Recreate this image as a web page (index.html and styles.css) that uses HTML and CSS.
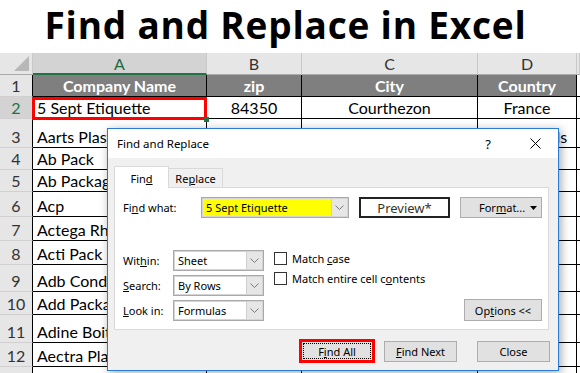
FILE: index.html
```html
<!DOCTYPE html>
<html lang="en">
<head>
  <meta charset="UTF-8">
  <title>Find and Replace in Excel</title>
  <link rel="stylesheet" href="styles.css">
</head>
<body>
  <div class="page">
    <h1 class="title">Find and Replace in Excel</h1>

    <div class="sheet">
      <!-- column letters -->
      <div class="hd corner"><span class="tri"></span></div>
      <div class="hd sel">A</div>
      <div class="hd">B</div>
      <div class="hd">C</div>
      <div class="hd">D</div>
      <div class="hd"></div>

      <div class="num">1</div>
      <div class="th">Company Name</div>
      <div class="th">zip</div>
      <div class="th">City</div>
      <div class="th">Country</div>
      <div class="e"></div>

      <div class="num sel-num">2</div>
      <div class="name picked">5 Sept Etiquette</div>
      <div>84350</div>
      <div>Courthezon</div>
      <div>France</div>
      <div class="e"></div>

      <div class="num">3</div>
      <div class="name">Aarts Plastics</div>
      <div>5491</div>
      <div>Sint-Oedenrode</div>
      <div>Nederlands</div>
      <div class="e"></div>

      <div class="num">4</div>
      <div class="name">Ab Pack</div>
      <div>84800</div>
      <div>Saumane</div>
      <div>France</div>
      <div class="e"></div>

      <div class="num">5</div>
      <div class="name">Ab Packaging</div>
      <div>31300</div>
      <div>Toulouse</div>
      <div>France</div>
      <div class="e"></div>

      <div class="num">6</div>
      <div class="name">Acp</div>
      <div>77600</div>
      <div>Bussy</div>
      <div>France</div>
      <div class="e"></div>

      <div class="num">7</div>
      <div class="name">Actega Rhenania</div>
      <div>41516</div>
      <div>Grevenbroich</div>
      <div>Germany</div>
      <div class="e"></div>

      <div class="num">8</div>
      <div class="name">Acti Pack</div>
      <div>69800</div>
      <div>Saint-Priest</div>
      <div>France</div>
      <div class="e"></div>

      <div class="num">9</div>
      <div class="name">Adb Conditionnement</div>
      <div>49300</div>
      <div>Cholet</div>
      <div>France</div>
      <div class="e"></div>

      <div class="num">10</div>
      <div class="name">Add Packaging</div>
      <div>75008</div>
      <div>Paris</div>
      <div>France</div>
      <div class="e"></div>

      <div class="num">11</div>
      <div class="name">Adine Boites</div>
      <div>69120</div>
      <div>Vaulx</div>
      <div>France</div>
      <div class="e"></div>

      <div class="num">12</div>
      <div class="name">Aectra Plastiques</div>
      <div>60000</div>
      <div>Beauvais</div>
      <div>France</div>
      <div class="e"></div>

      <div class="num">13</div>
      <div class="name">Aerosol Service</div>
      <div>4416</div>
      <div>Bubendorf</div>
      <div>Swiss</div>
      <div class="e"></div>
    </div>

    <div class="dialog">
      <div class="dialog-title">
        <span>Find and Replace</span>
        <span class="help">?</span>
        <svg class="close-x" width="11" height="11" viewBox="0 0 11 11">
          <path d="M0.5 0.5 L10.5 10.5 M10.5 0.5 L0.5 10.5" stroke="#000" stroke-width="1" fill="none"/>
        </svg>
      </div>

      <div class="dialog-body">
        <div class="tabs">
          <div class="tab current"><span>Fin<u>d</u></span></div>
          <div class="tab"><span>Re<u>p</u>lace</span></div>
        </div>

        <div class="panel">
          <div class="find-row">
            <span class="lbl">Fi<u>n</u>d what:</span>
            <div class="combo find-box">
              <span class="value hl">5 Sept Etiquette</span>
              <span class="arrow"><svg width="9" height="5" viewBox="0 0 9 5"><path d="M0.5 0.5 L4.5 4.5 L8.5 0.5" fill="none" stroke="#7a7a7a"/></svg></span>
            </div>
            <div class="preview">Preview*</div>
            <button class="btn format">
              <span>For<u>m</u>at...</span>
              <svg width="7" height="4" viewBox="0 0 7 4"><path d="M0 0 L7 0 L3.5 4 Z" fill="#000"/></svg>
            </button>
          </div>

          <div class="options">
            <div class="opt-grid">
              <span class="lbl">Wit<u>h</u>in:</span>
              <div class="combo">
                <span class="value">Sheet</span>
                <span class="arrow"><svg width="9" height="5" viewBox="0 0 9 5"><path d="M0.5 0.5 L4.5 4.5 L8.5 0.5" fill="none" stroke="#7a7a7a"/></svg></span>
              </div>
              <span class="lbl"><u>S</u>earch:</span>
              <div class="combo">
                <span class="value">By Rows</span>
                <span class="arrow"><svg width="9" height="5" viewBox="0 0 9 5"><path d="M0.5 0.5 L4.5 4.5 L8.5 0.5" fill="none" stroke="#7a7a7a"/></svg></span>
              </div>
              <span class="lbl"><u>L</u>ook in:</span>
              <div class="combo">
                <span class="value">Formulas</span>
                <span class="arrow"><svg width="9" height="5" viewBox="0 0 9 5"><path d="M0.5 0.5 L4.5 4.5 L8.5 0.5" fill="none" stroke="#7a7a7a"/></svg></span>
              </div>
            </div>

            <div class="checks">
              <label class="check"><span class="box"></span><span>Match <u>c</u>ase</span></label>
              <label class="check"><span class="box"></span><span>Match entire cell c<u>o</u>ntents</span></label>
            </div>

            <button class="btn opt-btn">Op<u>t</u>ions &lt;&lt;</button>
          </div>
        </div>

        <div class="actions">
          <button class="btn find-all"><span class="focus"><span>F<u>i</u>nd All</span></span></button>
          <button class="btn"><u>F</u>ind Next</button>
          <button class="btn close">Close</button>
        </div>
      </div>
    </div>
  </div>
</body>
</html>
```

FILE: styles.css
```css
* {
  box-sizing: border-box;
}
body {
  margin: 0;
  width: 580px;
  height: 373px;
  overflow: hidden;
  background: #fff;
  font-family: Lato, "Noto Sans", sans-serif;
}
.page {
  position: relative;
  height: 373px;
}
.title {
  margin: 0;
  height: 53px;
  padding-right: 9px;
  font-family: "Open Sans", sans-serif;
  font-weight: 700;
  font-size: 37px;
  letter-spacing: 0.8px;
  line-height: 50px;
  text-align: center;
  color: #000;
}

/* spreadsheet */
.sheet {
  display: grid;
  grid-template-columns: 33px 174px 95px 176px 99px 3px;
  grid-template-rows: 22px 22px 22px 29px 22px 22px 25px 24px 24px 27px 23px 28px 24px 24px;
  font-size: 16px;
  color: #000;
}
.sheet > div {
  display: flex;
  align-items: flex-end;
  justify-content: center;
  line-height: 21px;
  white-space: nowrap;
  overflow: hidden;
  border-right: 1px solid #000;
  border-bottom: 1px solid #000;
}
.sheet > .hd {
  align-items: center;
  background: #e6e6e6;
  color: #333;
  border-right: 1px solid #c9c9c9;
  border-bottom: 1px solid #ababab;
}
.sheet > .hd.sel {
  background: #d3d3d3;
  color: #1e6b40;
  border-bottom: 2px solid #217346;
}
.sheet > .corner {
  justify-content: flex-end;
  align-items: flex-end;
  padding: 0 3px 3px 0;
}
.tri {
  width: 15px;
  height: 15px;
  background: #b8b8b8;
  clip-path: polygon(100% 0, 100% 100%, 0 100%);
}
.sheet > .num {
  background: #e6e6e6;
  color: #333;
  border-bottom: 1px solid #d0d0d0;
  border-right: 1px solid #000;
}
.sheet > .sel-num {
  background: #d3d3d3;
  color: #217346;
}
.sheet > .th {
  align-items: center;
  background: #7f7f7f;
  color: #fff;
  font-weight: 700;
}
.sheet > .name {
  justify-content: flex-start;
  padding-left: 4px;
}
.sheet > .e {
  border-right: none;
}
.sheet > .picked {
  position: relative;
  overflow: visible;
}
.picked::after {
  content: "";
  position: absolute;
  left: -1px;
  top: 0;
  right: -1px;
  bottom: -2px;
  border: 3px solid #ff0000;
}
.picked::before {
  content: "";
  position: absolute;
  right: -3px;
  bottom: -4px;
  width: 5px;
  height: 5px;
  background: #217346;
  z-index: 1;
}

/* dialog */
.dialog {
  position: absolute;
  left: 107px;
  top: 128px;
  width: 452px;
  height: 243px;
  border: 1px solid #2b7bd2;
  background: #f0f0f0;
  box-shadow: 2px 2px 9px rgba(0, 0, 0, 0.35);
  font-family: "Noto Sans", sans-serif;
  font-size: 11px;
  color: #000;
}
.dialog-title {
  display: flex;
  align-items: center;
  height: 29px;
  padding: 0 17px 0 9px;
  background: #fff;
  font-size: 11.5px;
}
.help {
  margin-left: auto;
  margin-right: 39px;
  font-size: 13px;
}
.dialog-body {
  padding: 8px 9px 0 6px;
}
.tabs {
  display: flex;
  align-items: flex-end;
  height: 21px;
}
.tab {
  display: flex;
  align-items: center;
  justify-content: center;
  width: 55px;
  height: 19px;
  border: 1px solid #d9d9d9;
  border-bottom: none;
  background: #f0f0f0;
}
.tab + .tab {
  margin-left: -1px;
}
.tab.current {
  position: relative;
  z-index: 1;
  height: 22px;
  margin-bottom: -1px;
  background: #fff;
  padding-top: 1px;
}
.panel {
  height: 143px;
  padding: 9px 6px 0 8px;
  border: 1px solid #d9d9d9;
  background: #fff;
}
.find-row {
  display: flex;
  align-items: center;
  height: 21px;
}
.lbl {
  white-space: nowrap;
}
.find-row .lbl {
  width: 78px;
}
.combo {
  display: flex;
  height: 21px;
  border: 1px solid #a9a9a9;
  box-shadow: inset 0 0 0 1px #d4d4d4;
  padding: 1px;
  background: #fff;
}
.combo .value {
  flex: 1;
  display: flex;
  align-items: center;
  padding-left: 3px;
  white-space: nowrap;
}
.combo .arrow {
  display: flex;
  align-items: center;
  justify-content: center;
  width: 16px;
  background: #e6e6e6;
  border-left: 1px solid #cfcfcf;
}
.find-box {
  width: 148px;
}
.hl {
  flex: 0 0 98px;
  background: #ffff00;
}
.preview {
  display: flex;
  align-items: center;
  justify-content: center;
  width: 91px;
  height: 21px;
  margin-left: 10px;
  border: 2px solid #222;
  font-size: 13px;
  color: #3a3328;
}
.btn {
  width: 73px;
  height: 21px;
  padding: 0;
  border: 1px solid #adadad;
  background: #e1e1e1;
  font-family: "Noto Sans", sans-serif;
  font-size: 11px;
  color: #000;
}
.format {
  display: flex;
  align-items: center;
  justify-content: space-between;
  width: 82px;
  margin-left: 10px;
  padding: 0 4px 0 18px;
}
.options {
  display: flex;
  margin-top: 32px;
}
.opt-grid {
  display: grid;
  grid-template-columns: 50px 91px;
  grid-auto-rows: 21px;
  row-gap: 4px;
  align-items: center;
}
.checks {
  display: flex;
  flex-direction: column;
  gap: 4px;
  margin-left: 10px;
}
.check {
  display: flex;
  align-items: center;
  height: 16px;
  white-space: nowrap;
}
.box {
  width: 13px;
  height: 13px;
  margin-right: 5px;
  border: 1px solid #333;
  background: #fff;
}
.opt-btn {
  align-self: flex-end;
  width: 78px;
  height: 22px;
  margin-left: auto;
}
.actions {
  display: flex;
  align-items: center;
  justify-content: flex-end;
  margin-top: 9px;
}
.find-all {
  width: 76px;
  height: 24px;
  margin-right: 9px;
  border: 3px solid #ff0000;
  padding: 1px;
}
.find-all .focus {
  display: flex;
  align-items: center;
  justify-content: center;
  height: 100%;
  border: 1px dotted #000;
}
.close {
  margin-left: 20px;
  margin-right: -1px;
}
u {
  text-underline-offset: 1px;
}
```
